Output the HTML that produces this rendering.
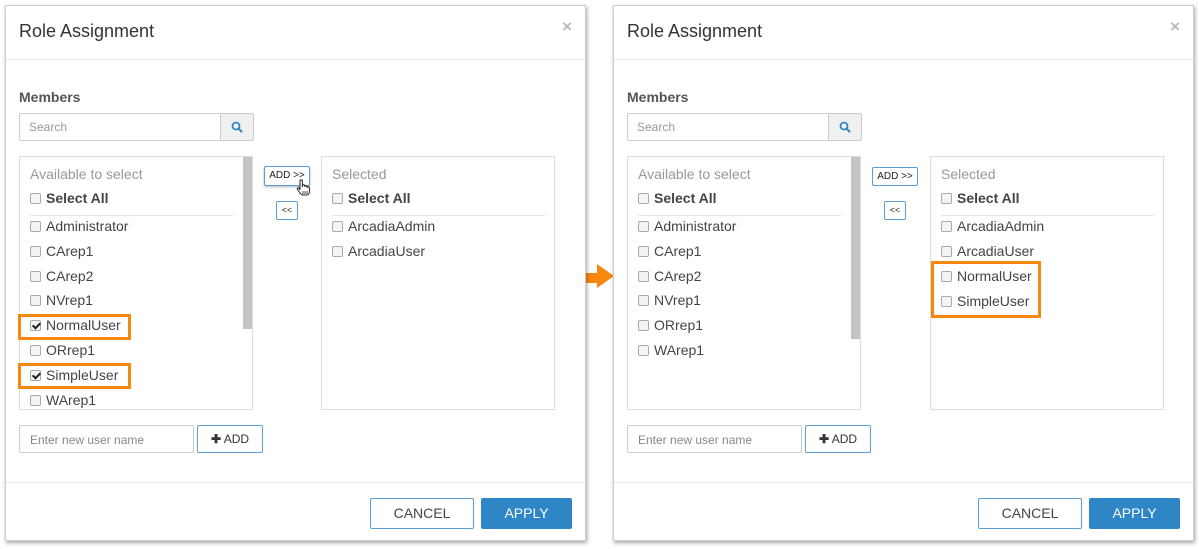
<!DOCTYPE html>
<html><head><meta charset="utf-8"><style>
*{box-sizing:border-box;margin:0;padding:0}
body{width:1199px;height:549px;background:#fff;position:relative;overflow:hidden;font-family:"Liberation Sans",sans-serif;color:#444}
.a{position:absolute}
.dlg{position:absolute;top:5px;width:581px;height:536px;background:#fff;border:1px solid #ccc;box-shadow:1px 2px 4px rgba(0,0,0,.35)}
.t{position:absolute;left:13px;top:15px;font-size:18px;color:#333}
.x{position:absolute;right:13px;top:11px;font-size:17px;color:#bbb;font-weight:bold}
.hl{position:absolute;left:0;right:0;height:1px;background:#e5e5e5}
.box{position:absolute;border:1px solid #ddd;background:#fff}
.it{position:absolute;font-size:14px;color:#444;white-space:nowrap}
.cb{display:inline-block;width:11px;height:11px;border:1px solid #aaa;border-radius:2px;background:#f4f4f4;vertical-align:-1px;margin-right:5px;position:relative}
.cb.on::after{content:"";position:absolute;left:3px;top:0px;width:3px;height:6px;border:solid #222;border-width:0 2px 2px 0;transform:rotate(45deg)}
.btn{position:absolute;border:1px solid #5aa0d6;border-radius:2px;background:#fff;font-size:10px;color:#222;text-align:center}
.org{position:absolute;border:3px solid #f7870f}
.sb{position:absolute;left:200px;top:-1px;width:34px;height:28px;background:#f0f0f0;border:1px solid #ccc;border-radius:0 2px 2px 0}
</style></head><body>

<div class="a" style="left:586px;top:273px;width:12px;height:10px;background:#f7870f"></div>
<div class="a" style="left:597px;top:264px;width:0;height:0;border-top:12px solid transparent;border-bottom:12px solid transparent;border-left:17px solid #f7870f"></div>

<!-- LEFT -->
<div class="dlg" style="left:5px">
<div class="t">Role Assignment</div><div class="x">×</div>
<div class="hl" style="top:53px"></div>
<div class="it" style="left:13px;top:83px;font-weight:bold;color:#555">Members</div>
<div class="box" style="left:13px;top:107px;width:234px;height:28px;border-color:#ccc;border-radius:2px"><span style="position:absolute;left:9px;top:6px;font-size:12px;color:#999">Search</span><div class="sb"><svg width="12" height="12" style="position:absolute;left:10px;top:7px" viewBox="0 0 12 12"><circle cx="5" cy="5" r="3.5" fill="none" stroke="#2e86c6" stroke-width="1.8"/><path d="M7.5 7.5L11 11" stroke="#2e86c6" stroke-width="2"/></svg></div></div>
<div class="box" style="left:13px;top:150px;width:234px;height:254px">
 <div class="a" style="left:223px;top:0;width:9px;height:172px;background:#c4c4c4"></div>
 <div class="it" style="left:10px;top:9px;color:#999">Available to select</div>
 <div class="it" style="left:10px;top:33px;font-weight:bold"><span class="cb"></span>Select All</div>
 <div class="a" style="left:10px;top:58px;width:203px;height:1px;background:#e5e5e5"></div>
 <div class="it" style="left:10px;top:61px"><span class="cb"></span>Administrator</div>
 <div class="it" style="left:10px;top:86px"><span class="cb"></span>CArep1</div>
 <div class="it" style="left:10px;top:111px"><span class="cb"></span>CArep2</div>
 <div class="it" style="left:10px;top:135px"><span class="cb"></span>NVrep1</div>
 <div class="it" style="left:10px;top:160px"><span class="cb on"></span>NormalUser</div>
 <div class="it" style="left:10px;top:185px"><span class="cb"></span>ORrep1</div>
 <div class="it" style="left:10px;top:210px"><span class="cb on"></span>SimpleUser</div>
 <div class="it" style="left:10px;top:235px"><span class="cb"></span>WArep1</div>
</div>
<div class="org" style="left:12px;top:308px;width:113px;height:26px"></div>
<div class="org" style="left:12px;top:357px;width:113px;height:26px"></div>
<div class="btn" style="left:258px;top:160px;width:46px;height:20px;line-height:18px;box-shadow:0 1px 2px rgba(0,0,0,.3)">ADD &gt;&gt;</div>
<svg class="a" style="left:290px;top:172px" width="14" height="18" viewBox="0 0 14 18"><path d="M4 12V3a1.2 1.2 0 0 1 2.4 0v6l0-1a1.2 1.2 0 0 1 2.4 0v1a1.2 1.2 0 0 1 2.4 0v1a1.1 1.1 0 0 1 2.2 0v4c0 2-1.5 3-3 3H7c-1.5 0-2.2-.8-3-2l-2.5-3.5a1.1 1.1 0 0 1 1.8-1.3z" fill="#fff" stroke="#222" stroke-width="1"/><path d="M7 13v3M9 13v3M11 13v3" stroke="#222" stroke-width=".8"/></svg>
<div class="btn" style="left:270px;top:195px;width:22px;height:19px;line-height:17px;font-size:9px">&lt;&lt;</div>
<div class="box" style="left:315px;top:150px;width:234px;height:254px">
 <div class="it" style="left:10px;top:9px;color:#999">Selected</div>
 <div class="it" style="left:10px;top:33px;font-weight:bold"><span class="cb"></span>Select All</div>
 <div class="a" style="left:10px;top:58px;width:213px;height:1px;background:#e5e5e5"></div>
 <div class="it" style="left:10px;top:61px"><span class="cb"></span>ArcadiaAdmin</div>
 <div class="it" style="left:10px;top:86px"><span class="cb"></span>ArcadiaUser</div>
</div>
<div class="box" style="left:13px;top:419px;width:175px;height:28px;border-color:#ccc;border-radius:2px"><span style="position:absolute;left:10px;top:7px;font-size:12px;color:#888">Enter new user name</span></div>
<div class="btn" style="left:191px;top:419px;width:66px;height:28px;line-height:26px;font-size:12px;color:#333"><b>✚</b> ADD</div>
<div class="hl" style="top:476px"></div>
<div class="btn" style="left:364px;top:492px;width:104px;height:31px;line-height:29px;font-size:14px;color:#444">CANCEL</div>
<div class="btn" style="left:475px;top:492px;width:91px;height:31px;line-height:29px;font-size:14px;color:#fff;background:#2e86c6;border-color:#2e86c6">APPLY</div>
</div>

<!-- RIGHT -->
<div class="dlg" style="left:613px">
<div class="t">Role Assignment</div><div class="x">×</div>
<div class="hl" style="top:53px"></div>
<div class="it" style="left:13px;top:83px;font-weight:bold;color:#555">Members</div>
<div class="box" style="left:13px;top:107px;width:234px;height:28px;border-color:#ccc;border-radius:2px"><span style="position:absolute;left:9px;top:6px;font-size:12px;color:#999">Search</span><div class="sb"><svg width="12" height="12" style="position:absolute;left:10px;top:7px" viewBox="0 0 12 12"><circle cx="5" cy="5" r="3.5" fill="none" stroke="#2e86c6" stroke-width="1.8"/><path d="M7.5 7.5L11 11" stroke="#2e86c6" stroke-width="2"/></svg></div></div>
<div class="box" style="left:13px;top:150px;width:234px;height:254px">
 <div class="a" style="left:223px;top:0;width:9px;height:182px;background:#c4c4c4"></div>
 <div class="it" style="left:10px;top:9px;color:#999">Available to select</div>
 <div class="it" style="left:10px;top:33px;font-weight:bold"><span class="cb"></span>Select All</div>
 <div class="a" style="left:10px;top:58px;width:203px;height:1px;background:#e5e5e5"></div>
 <div class="it" style="left:10px;top:61px"><span class="cb"></span>Administrator</div>
 <div class="it" style="left:10px;top:86px"><span class="cb"></span>CArep1</div>
 <div class="it" style="left:10px;top:111px"><span class="cb"></span>CArep2</div>
 <div class="it" style="left:10px;top:135px"><span class="cb"></span>NVrep1</div>
 <div class="it" style="left:10px;top:160px"><span class="cb"></span>ORrep1</div>
 <div class="it" style="left:10px;top:185px"><span class="cb"></span>WArep1</div>
</div>
<div class="btn" style="left:258px;top:161px;width:46px;height:19px;line-height:17px">ADD &gt;&gt;</div>
<div class="btn" style="left:270px;top:195px;width:22px;height:19px;line-height:17px;font-size:9px">&lt;&lt;</div>
<div class="box" style="left:316px;top:150px;width:234px;height:254px">
 <div class="it" style="left:10px;top:9px;color:#999">Selected</div>
 <div class="it" style="left:10px;top:33px;font-weight:bold"><span class="cb"></span>Select All</div>
 <div class="a" style="left:10px;top:58px;width:213px;height:1px;background:#e5e5e5"></div>
 <div class="it" style="left:10px;top:61px"><span class="cb"></span>ArcadiaAdmin</div>
 <div class="it" style="left:10px;top:86px"><span class="cb"></span>ArcadiaUser</div>
 <div class="it" style="left:10px;top:111px"><span class="cb"></span>NormalUser</div>
 <div class="it" style="left:10px;top:136px"><span class="cb"></span>SimpleUser</div>
</div>
<div class="org" style="left:317px;top:255px;width:110px;height:57px"></div>
<div class="box" style="left:13px;top:419px;width:175px;height:28px;border-color:#ccc;border-radius:2px"><span style="position:absolute;left:10px;top:7px;font-size:12px;color:#888">Enter new user name</span></div>
<div class="btn" style="left:191px;top:419px;width:66px;height:28px;line-height:26px;font-size:12px;color:#333"><b>✚</b> ADD</div>
<div class="hl" style="top:476px"></div>
<div class="btn" style="left:364px;top:492px;width:104px;height:31px;line-height:29px;font-size:14px;color:#444">CANCEL</div>
<div class="btn" style="left:475px;top:492px;width:91px;height:31px;line-height:29px;font-size:14px;color:#fff;background:#2e86c6;border-color:#2e86c6">APPLY</div>
</div>
</body></html>
